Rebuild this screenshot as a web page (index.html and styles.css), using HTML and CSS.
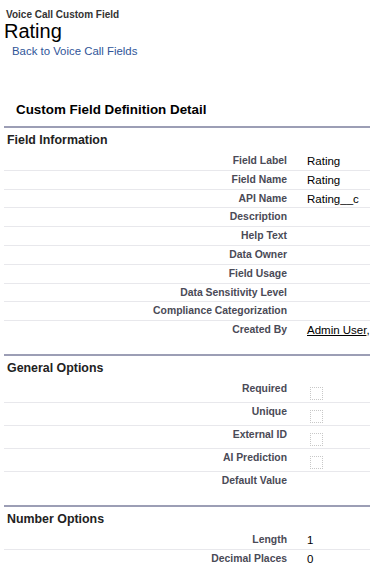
FILE: index.html
```html
<!DOCTYPE html>
<html lang="en">

<head>
  <meta charset="UTF-8">
  <meta name="viewport" content="width=device-width, initial-scale=1.0">
  <title>Rating | Custom Field</title>
  <link rel="stylesheet" href="styles.css">
</head>

<body>
  <div class="page-header">
    <p class="page-header_type">Voice Call Custom Field</p>
    <h1 class="page-header_title">Rating</h1>
    <a class="page-header_back" href="#">Back to Voice Call Fields</a>
  </div>

  <h2 class="detail-title">Custom Field Definition Detail</h2>

  <div class="detail-section">
    <h3 class="detail-section_title">Field Information</h3>
    <div class="detail-row"><span class="detail-row_label">Field Label</span><span class="detail-row_value">Rating</span></div>
    <div class="detail-row"><span class="detail-row_label">Field Name</span><span class="detail-row_value">Rating</span></div>
    <div class="detail-row"><span class="detail-row_label">API Name</span><span class="detail-row_value">Rating__c</span></div>
    <div class="detail-row"><span class="detail-row_label">Description</span><span class="detail-row_value"></span></div>
    <div class="detail-row"><span class="detail-row_label">Help Text</span><span class="detail-row_value"></span></div>
    <div class="detail-row"><span class="detail-row_label">Data Owner</span><span class="detail-row_value"></span></div>
    <div class="detail-row"><span class="detail-row_label">Field Usage</span><span class="detail-row_value"></span></div>
    <div class="detail-row"><span class="detail-row_label">Data Sensitivity Level</span><span class="detail-row_value"></span></div>
    <div class="detail-row"><span class="detail-row_label">Compliance Categorization</span><span class="detail-row_value"></span></div>
    <div class="detail-row detail-row--last"><span class="detail-row_label">Created By</span><span class="detail-row_value"><a href="#">Admin User</a>,</span></div>
  </div>

  <div class="detail-section">
    <h3 class="detail-section_title">General Options</h3>
    <div class="detail-row"><span class="detail-row_label">Required</span><span class="detail-row_value"><span class="checkbox"></span></span></div>
    <div class="detail-row"><span class="detail-row_label">Unique</span><span class="detail-row_value"><span class="checkbox"></span></span></div>
    <div class="detail-row"><span class="detail-row_label">External ID</span><span class="detail-row_value"><span class="checkbox"></span></span></div>
    <div class="detail-row"><span class="detail-row_label">AI Prediction</span><span class="detail-row_value"><span class="checkbox"></span></span></div>
    <div class="detail-row detail-row--last"><span class="detail-row_label">Default Value</span><span class="detail-row_value"></span></div>
  </div>

  <div class="detail-section">
    <h3 class="detail-section_title">Number Options</h3>
    <div class="detail-row"><span class="detail-row_label">Length</span><span class="detail-row_value">1</span></div>
    <div class="detail-row detail-row--last"><span class="detail-row_label">Decimal Places</span><span class="detail-row_value">0</span></div>
  </div>
</body>

</html>
```

FILE: styles.css
```css
* {
  box-sizing: border-box;
  padding: 0;
  margin: 0;
}

html {
  font-family: 'Liberation Sans', Arial, sans-serif;
  color: #000;
}

body {
  background-color: #fff;
  width: 370px;
  overflow: hidden;
  font-size: 12px;
}

.page-header {
  padding: 8px 0 0 6px;
}

.page-header_type {
  font-size: 10px;
  font-weight: bold;
  color: #333;
  line-height: 13px;
}

.page-header_title {
  font-size: 20px;
  font-weight: normal;
  line-height: 20px;
  margin-left: -2px;
}

.page-header_back {
  display: block;
  margin: 3px 0 0 6px;
  font-size: 11.4px;
  line-height: 14px;
  color: #2f5598;
  text-decoration: none;
}

.detail-title {
  margin: 43px 0 0 16px;
  font-size: 13.4px;
  line-height: 18px;
}

.detail-section {
  margin: 7px 0 0 4px;
  border-top: 2px solid #9c9eb5;
}

.detail-section + .detail-section {
  margin-top: 15px;
}

.detail-section_title {
  font-size: 12.4px;
  line-height: 16px;
  padding: 4px 0 0 3px;
  height: 24px;
  color: #222;
}

.detail-row {
  display: flex;
  align-items: flex-start;
  padding: 3px 0 2px;
  border-bottom: 1px solid #e8e8ec;
  white-space: nowrap;
}

.detail-row--last {
  border-bottom: none;
}

.detail-row_label {
  width: 283px;
  flex-shrink: 0;
  text-align: right;
  font-size: 10.4px;
  font-weight: bold;
  line-height: 12.8px;
  color: #4a4a56;
}

.detail-row_value {
  padding-left: 20px;
  font-size: 11.5px;
  line-height: 12.8px;
}

.detail-row_value a {
  color: #000;
}

.checkbox {
  display: block;
  width: 13px;
  height: 13px;
  margin: 4px 0 0 3px;
  border: 1px dotted #c8c8c8;
}
```
